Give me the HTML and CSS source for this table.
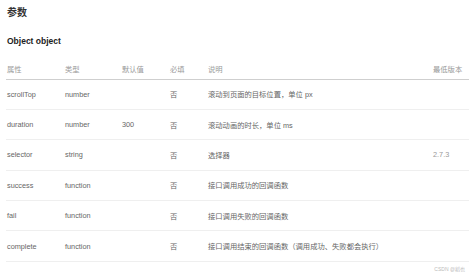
FILE: index.html
```html
<!DOCTYPE html>
<html lang="zh-CN">
<head>
  <meta charset="UTF-8">
  <meta name="viewport" content="width=device-width, initial-scale=1.0">
  <title>参数</title>
  <link rel="stylesheet" href="styles.css">
</head>
<body>
  <div class="page">
    <h2 class="title">参数</h2>
    <h3 class="subtitle">Object object</h3>
    <table class="params">
      <thead>
        <tr>
          <th class="col-name">属性</th>
          <th class="col-type">类型</th>
          <th class="col-default">默认值</th>
          <th class="col-required">必填</th>
          <th class="col-desc">说明</th>
          <th class="col-version">最低版本</th>
        </tr>
      </thead>
      <tbody>
        <tr>
          <td>scrollTop</td>
          <td>number</td>
          <td></td>
          <td>否</td>
          <td>滚动到页面的目标位置，单位 px</td>
          <td></td>
        </tr>
        <tr>
          <td>duration</td>
          <td>number</td>
          <td>300</td>
          <td>否</td>
          <td>滚动动画的时长，单位 ms</td>
          <td></td>
        </tr>
        <tr>
          <td>selector</td>
          <td>string</td>
          <td></td>
          <td>否</td>
          <td>选择器</td>
          <td class="version">2.7.3</td>
        </tr>
        <tr>
          <td>success</td>
          <td>function</td>
          <td></td>
          <td>否</td>
          <td>接口调用成功的回调函数</td>
          <td></td>
        </tr>
        <tr>
          <td>fail</td>
          <td>function</td>
          <td></td>
          <td>否</td>
          <td>接口调用失败的回调函数</td>
          <td></td>
        </tr>
        <tr>
          <td>complete</td>
          <td>function</td>
          <td></td>
          <td>否</td>
          <td>接口调用结束的回调函数（调用成功、失败都会执行）</td>
          <td></td>
        </tr>
      </tbody>
    </table>
    <div class="watermark">CSDN @稻也</div>
  </div>
</body>
</html>
```

FILE: styles.css
```css
body {
  margin: 0;
  background: #ffffff;
  font-family: "Liberation Sans", "Noto Sans CJK SC", sans-serif;
  color: #555555;
}

.page {
  padding: 0 5px 0 6px;
}

.title {
  margin: 0;
  padding-top: 7px;
  font-size: 10px;
  line-height: 12px;
  font-weight: bold;
  color: #333333;
  padding-left: 1px;
}

.subtitle {
  margin: 16px 0 0 0;
  font-size: 8.5px;
  line-height: 12px;
  font-weight: bold;
  color: #222222;
  padding-left: 1px;
}

.params {
  width: 100%;
  margin-top: 13px;
  border-collapse: collapse;
  table-layout: fixed;
  font-size: 7.3px;
}

.params th {
  height: 19px;
  padding: 0 0 0 1px;
  text-align: left;
  font-weight: normal;
  color: #999999;
  border-bottom: 1px solid #cfcfcf;
  box-sizing: border-box;
}

.params td {
  height: 30.4px;
  padding: 0 0 0 1px;
  color: #666666;
  border-bottom: 1px solid #efefef;
  white-space: nowrap;
  box-sizing: border-box;
}

.col-name { width: 58px; }
.col-type { width: 57px; }
.col-default { width: 48px; }
.col-required { width: 38px; }
.col-desc { width: 225px; }

.params .version {
  color: #999999;
}

.watermark {
  margin-top: 3px;
  text-align: right;
  font-size: 5px;
  color: #bbbbbb;
  padding-right: 4px;
}
```
